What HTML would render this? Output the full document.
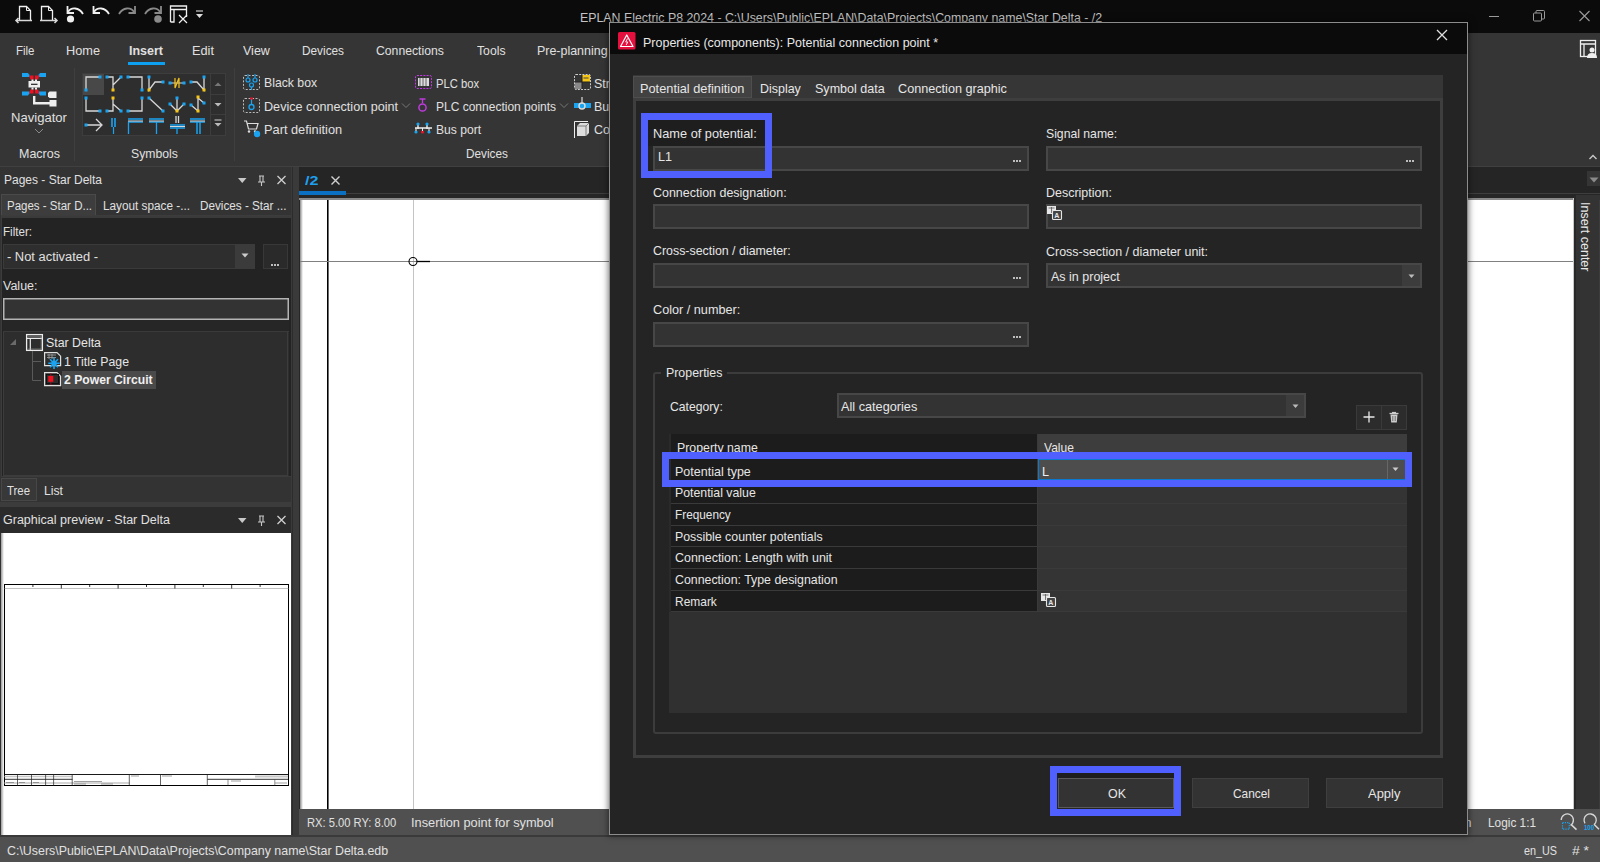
<!DOCTYPE html><html><head><meta charset="utf-8"><style>
html,body{margin:0;padding:0;}
body{width:1600px;height:862px;position:relative;overflow:hidden;background:#2b2b2b;font-family:"Liberation Sans",sans-serif;}
.r{position:absolute;}
.t{position:absolute;white-space:pre;line-height:20px;}
</style></head><body>
<div class="r" style="left:0px;top:0px;width:1600px;height:33px;background:#0b0b0b;"></div>
<div class="t" style="left:580.00px;top:7.74px;font-size:12.3px;color:#c4c4c4;transform:scaleX(1.0051);transform-origin:0 0;">EPLAN Electric P8 2024 - C:\Users\Public\EPLAN\Data\Projects\Company name\Star Delta - /2</div>
<svg class="r" style="left:14px;top:4px;" width="20" height="20" viewBox="0 0 20 20"><path d="M5.5 16.5V2.5h7l4 4v10" fill="none" stroke="#f0f0f0" stroke-width="1.3"/><path d="M12.5 2.5v4h4" fill="none" stroke="#f0f0f0" stroke-width="1"/><path d="M2 16.5h16M4.5 14l-2.5 2.5 2.5 2.5" fill="none" stroke="#d8d8d8" stroke-width="1.5"/></svg>
<svg class="r" style="left:39px;top:4px;" width="20" height="20" viewBox="0 0 20 20"><path d="M2.5 16.5V2.5h7l4 4v10" fill="none" stroke="#f0f0f0" stroke-width="1.3"/><path d="M9.5 2.5v4h4" fill="none" stroke="#f0f0f0" stroke-width="1"/><path d="M1 16.5h17M15.5 14l2.5 2.5-2.5 2.5" fill="none" stroke="#d8d8d8" stroke-width="1.5"/></svg>
<svg class="r" style="left:65px;top:3px;" width="22" height="22" viewBox="0 0 22 22"><path d="M3 9 C6 4, 14 4, 18 11" fill="none" stroke="#f0f0f0" stroke-width="1.8"/><path d="M2.5 3v7h6.5" fill="none" stroke="#f0f0f0" stroke-width="1.8"/><circle cx="5.5" cy="16" r="3.6" fill="#f0f0f0"/></svg>
<svg class="r" style="left:91px;top:3px;" width="22" height="22" viewBox="0 0 22 22"><path d="M3 9 C6 4, 14 4, 18 11" fill="none" stroke="#f0f0f0" stroke-width="1.8"/><path d="M2.5 3v7h6.5" fill="none" stroke="#f0f0f0" stroke-width="1.8"/></svg>
<svg class="r" style="left:117px;top:3px;" width="22" height="22" viewBox="0 0 22 22"><path d="M2 11 C6 4, 14 4, 17 9" fill="none" stroke="#8a8a8a" stroke-width="1.8"/><path d="M18 3v7h-6.5" fill="none" stroke="#8a8a8a" stroke-width="1.8"/></svg>
<svg class="r" style="left:143px;top:3px;" width="22" height="22" viewBox="0 0 22 22"><path d="M2 11 C6 4, 14 4, 17 9" fill="none" stroke="#8a8a8a" stroke-width="1.8"/><path d="M18 3v7h-6.5" fill="none" stroke="#8a8a8a" stroke-width="1.8"/><circle cx="15" cy="16" r="3.8" fill="#8a8a8a"/></svg>
<svg class="r" style="left:168px;top:4px;" width="22" height="20" viewBox="0 0 22 20"><path d="M2.5 18V2h16v11" fill="none" stroke="#f0f0f0" stroke-width="1.3"/><path d="M2.5 5.5h16M6 5.5V18H2.5" fill="none" stroke="#f0f0f0" stroke-width="1.3"/><path d="M11 11l8 8M19 11l-8 8" stroke="#f0f0f0" stroke-width="1.2"/></svg>
<svg class="r" style="left:195px;top:9px;" width="10" height="10" viewBox="0 0 10 10"><path d="M1 2h7" stroke="#ccc" stroke-width="1.2"/><path d="M1 5h7l-3.5 4z" fill="#ddd"/></svg>
<svg class="r" style="left:1486px;top:8px;" width="16" height="16" viewBox="0 0 16 16"><path d="M3 8.5h10" stroke="#9a9a9a" stroke-width="1"/></svg>
<svg class="r" style="left:1531px;top:8px;" width="16" height="16" viewBox="0 0 16 16"><rect x="2.5" y="5" width="8" height="8" rx="1" fill="none" stroke="#9a9a9a"/><path d="M5 5V3.5a1 1 0 0 1 1-1h6.5a1 1 0 0 1 1 1V10a1 1 0 0 1-1 1H10.5" fill="none" stroke="#9a9a9a"/></svg>
<svg class="r" style="left:1576px;top:8px;" width="16" height="16" viewBox="0 0 16 16"><path d="M3.5 3l10 10M13.5 3l-10 10" stroke="#9a9a9a" stroke-width="1.1"/></svg>
<div class="r" style="left:0px;top:33px;width:1600px;height:133px;background:#353535;"></div>
<div class="r" style="left:0px;top:166px;width:1600px;height:1px;background:#404040;"></div>
<div class="t" style="left:15.50px;top:40.82px;font-size:13.5px;color:#e0e0e0;transform:scaleX(0.8506);transform-origin:0 0;">File</div>
<div class="t" style="left:66.00px;top:40.82px;font-size:13.5px;color:#e0e0e0;transform:scaleX(0.9444);transform-origin:0 0;">Home</div>
<div class="t" style="left:129.00px;top:40.82px;font-size:13.5px;color:#e0e0e0;font-weight:bold;transform:scaleX(0.9252);transform-origin:0 0;">Insert</div>
<div class="t" style="left:192.00px;top:40.82px;font-size:13.5px;color:#e0e0e0;transform:scaleX(0.9462);transform-origin:0 0;">Edit</div>
<div class="t" style="left:243.00px;top:40.82px;font-size:13.5px;color:#e0e0e0;transform:scaleX(0.9270);transform-origin:0 0;">View</div>
<div class="t" style="left:301.70px;top:40.82px;font-size:13.5px;color:#e0e0e0;transform:scaleX(0.8750);transform-origin:0 0;">Devices</div>
<div class="t" style="left:376.00px;top:40.82px;font-size:13.5px;color:#e0e0e0;transform:scaleX(0.9040);transform-origin:0 0;">Connections</div>
<div class="t" style="left:476.50px;top:40.82px;font-size:13.5px;color:#e0e0e0;transform:scaleX(0.9048);transform-origin:0 0;">Tools</div>
<div class="t" style="left:537.00px;top:40.82px;font-size:13.5px;color:#e0e0e0;transform:scaleX(0.9216);transform-origin:0 0;">Pre-planning</div>
<div class="r" style="left:128px;top:62px;width:37px;height:3px;background:#0ea0f0;"></div>
<div class="r" style="left:74px;top:68px;width:1px;height:93px;background:#3f3f3f;"></div>
<div class="r" style="left:234px;top:68px;width:1px;height:93px;background:#3f3f3f;"></div>
<svg class="r" style="left:18px;top:68px;" width="44" height="44" viewBox="18 68 44 44"><path d="M22 73h6l1 1.5h0.5v2.5H22z" fill="#1aa3f0"/><path d="M46 73h-6l-1 1.5h-0.5v2.5H46z" fill="#1aa3f0"/><path d="M22 95.5h6l1-1.5h0.5v-2.5H22z" fill="#1aa3f0"/><path d="M46 95.5h-6l-1-1.5h-0.5v-2.5H46z" fill="#1aa3f0"/><path d="M29 75.5h4.5v4h-3z M39.5 75.5h-4.5v4h3z M29 93.5h4.5v-4h-3z M39.5 93.5h-4.5v-4h3z" fill="#f01020"/><path d="M31.5 79.5h2v2h-2z M35 79.5h2v2h-2z M31.5 87.5h2v2h-2z M35 87.5h2v2h-2z" fill="#eee"/><rect x="28.5" y="81" width="11.5" height="6.5" fill="#eee"/><path d="M31 84.3h6.5" stroke="#222" stroke-width="1.2"/><path d="M34.2 96v7.2H50" fill="none" stroke="#eee" stroke-width="2.4"/><path d="M49.5 91.5h7v6.5h-7l-1.5-1.5v-3.5z" fill="#eee"/><rect x="49.5" y="100" width="7" height="6.5" fill="#eee"/></svg>
<div class="t" style="left:11.00px;top:108.13px;font-size:12.6px;color:#e0e0e0;transform:scaleX(1.0370);transform-origin:0 0;">Navigator</div>
<svg class="r" style="left:34px;top:128px;" width="10" height="6" viewBox="0 0 10 6"><path d="M1 1l4 4 4-4" fill="none" stroke="#888" stroke-width="1"/></svg>
<div class="t" style="left:19.00px;top:144.13px;font-size:12.6px;color:#e0e0e0;transform:scaleX(0.9909);transform-origin:0 0;">Macros</div>
<div class="t" style="left:131.00px;top:144.13px;font-size:12.6px;color:#e0e0e0;transform:scaleX(0.9716);transform-origin:0 0;">Symbols</div>
<div class="r" style="left:82px;top:73px;width:144px;height:63px;background:#2e2e2e;box-shadow:inset 0 0 0 1px #3d3d3d;"></div>
<div class="r" style="left:83px;top:74px;width:21px;height:21px;background:#484848;"></div>
<div class="r" style="left:210px;top:73px;width:1px;height:63px;background:#3d3d3d;"></div>
<div class="r" style="left:211px;top:94px;width:15px;height:1px;background:#3d3d3d;"></div>
<div class="r" style="left:211px;top:114px;width:15px;height:1px;background:#3d3d3d;"></div>
<svg class="r" style="left:80px;top:70px;" width="150" height="70" viewBox="80 70 150 70"><path d="M86 90 V77 H100" fill="none" stroke="#d8d8d8" stroke-width="1.3"/><rect x="98.5" y="75.5" width="3" height="3" fill="#1aa3f0"/><rect x="84.5" y="88.5" width="3" height="3" fill="#1aa3f0"/><path d="M107 77 H113 V90 M113 85 L121 77" fill="none" stroke="#d8d8d8" stroke-width="1.3"/><rect x="105.5" y="75.5" width="3" height="3" fill="#1aa3f0"/><rect x="119.5" y="75.5" width="3" height="3" fill="#1aa3f0"/><rect x="111.5" y="88.5" width="3" height="3" fill="#f5c518"/><path d="M128 77 H142 V90" fill="none" stroke="#d8d8d8" stroke-width="1.3"/><rect x="126.5" y="75.5" width="3" height="3" fill="#1aa3f0"/><rect x="140.5" y="88.5" width="3" height="3" fill="#1aa3f0"/><path d="M149 77 V90 L155 82 H163" fill="none" stroke="#d8d8d8" stroke-width="1.3"/><rect x="147.5" y="75.5" width="3" height="3" fill="#1aa3f0"/><rect x="161.5" y="80.5" width="3" height="3" fill="#1aa3f0"/><rect x="147.5" y="88.5" width="3" height="3" fill="#f5c518"/><path d="M170 83 H184" fill="none" stroke="#d8d8d8" stroke-width="1"/><path d="M175 78 V88 L179 78 V88" fill="none" stroke="#f5c518" stroke-width="1.2"/><rect x="168.5" y="81.5" width="3" height="3" fill="#1aa3f0"/><rect x="182.5" y="81.5" width="3" height="3" fill="#1aa3f0"/><path d="M191 82 H197 L204 90 V77" fill="none" stroke="#d8d8d8" stroke-width="1.3"/><rect x="189.5" y="80.5" width="3" height="3" fill="#1aa3f0"/><rect x="202.5" y="75.5" width="3" height="3" fill="#1aa3f0"/><rect x="202.5" y="88.5" width="3" height="3" fill="#f5c518"/><path d="M86 98 V111 H100" fill="none" stroke="#d8d8d8" stroke-width="1.3"/><rect x="84.5" y="96.5" width="3" height="3" fill="#1aa3f0"/><rect x="98.5" y="109.5" width="3" height="3" fill="#1aa3f0"/><path d="M107 111 H113 V98 M113 104 L121 111" fill="none" stroke="#d8d8d8" stroke-width="1.3"/><rect x="111.5" y="96.5" width="3" height="3" fill="#f5c518"/><rect x="105.5" y="109.5" width="3" height="3" fill="#1aa3f0"/><rect x="119.5" y="109.5" width="3" height="3" fill="#1aa3f0"/><path d="M128 111 H142 V98" fill="none" stroke="#d8d8d8" stroke-width="1.3"/><rect x="126.5" y="109.5" width="3" height="3" fill="#1aa3f0"/><rect x="140.5" y="96.5" width="3" height="3" fill="#1aa3f0"/><path d="M149 98 L163 111" fill="none" stroke="#d8d8d8" stroke-width="1.3"/><rect x="147.5" y="96.5" width="3" height="3" fill="#1aa3f0"/><rect x="161.5" y="109.5" width="3" height="3" fill="#1aa3f0"/><path d="M177 98 V111 M170 104 L177 111 L184 104" fill="none" stroke="#d8d8d8" stroke-width="1.3"/><rect x="175.5" y="96.5" width="3" height="3" fill="#1aa3f0"/><rect x="168.5" y="102.5" width="3" height="3" fill="#1aa3f0"/><rect x="182.5" y="102.5" width="3" height="3" fill="#1aa3f0"/><rect x="175.5" y="109.5" width="3" height="3" fill="#f5c518"/><path d="M198 97 V111 M198 98 L204 103 M191 105 L198 111" fill="none" stroke="#d8d8d8" stroke-width="1.3"/><rect x="196.5" y="95.5" width="3" height="3" fill="#f5c518"/><rect x="196.5" y="109.5" width="3" height="3" fill="#f5c518"/><rect x="202.5" y="101.5" width="3" height="3" fill="#1aa3f0"/><rect x="189.5" y="103.5" width="3" height="3" fill="#1aa3f0"/><path d="M86 125 H101 M96 119 L102 125 L96 131" fill="none" stroke="#d8d8d8" stroke-width="1.3"/><rect x="84.5" y="123.5" width="3" height="3" fill="#1aa3f0"/><path d="M112 118 V127 M115 118 V127" fill="none" stroke="#1aa3f0" stroke-width="1.6"/><path d="M113.5 127 V134" fill="none" stroke="#1aa3f0" stroke-width="1.2"/><path d="M128 119 H143 M128 122 H143" fill="none" stroke="#1aa3f0" stroke-width="1.5"/><path d="M128 121 H143" fill="none" stroke="#d8d8d8" stroke-width="1"/><path d="M128.5 122 V134" fill="none" stroke="#1aa3f0" stroke-width="1.3"/><path d="M149 119 H164 M149 122 H164" fill="none" stroke="#1aa3f0" stroke-width="1.5"/><path d="M149 121 H164" fill="none" stroke="#d8d8d8" stroke-width="1"/><path d="M156.5 122 V134" fill="none" stroke="#1aa3f0" stroke-width="1.3"/><path d="M176 116 V123 M178.5 116 V123" fill="none" stroke="#d8d8d8" stroke-width="1.3"/><path d="M170 125 H185 M170 128 H185" fill="none" stroke="#1aa3f0" stroke-width="1.5"/><path d="M170 126.5 H185" fill="none" stroke="#d8d8d8" stroke-width="1"/><path d="M177 128 V134" fill="none" stroke="#1aa3f0" stroke-width="1.3"/><path d="M190 119 H205 M190 122 H205" fill="none" stroke="#1aa3f0" stroke-width="1.5"/><path d="M190 121 H205" fill="none" stroke="#d8d8d8" stroke-width="1"/><path d="M197 122 V134 M200 122 V134" fill="none" stroke="#1aa3f0" stroke-width="1.5"/><path d="M214.5 86 L218 82.5 L221.5 86z" fill="#777"/><path d="M214.5 103 L218 106.5 L221.5 103z" fill="#bbb"/><path d="M214.5 120 h7" stroke="#bbb" stroke-width="1.2"/><path d="M214.5 123 L218 126.5 L221.5 123z" fill="#bbb"/></svg>
<svg class="r" style="left:240px;top:70px;" width="25" height="70" viewBox="240 70 25 70"><rect x="243.5" y="75.5" width="16" height="14" rx="1.5" fill="none" stroke="#bbb" stroke-dasharray="2 1.5"/><circle cx="248" cy="80" r="2" fill="none" stroke="#1aa3f0" stroke-width="1.2"/><circle cx="255" cy="80" r="2" fill="none" stroke="#1aa3f0" stroke-width="1.2"/><circle cx="251.5" cy="85" r="2" fill="none" stroke="#1aa3f0" stroke-width="1.2"/><path d="M248 74v4 M255 74v4 M251.5 87v3" stroke="#1aa3f0" stroke-width="1.1"/><rect x="243.5" y="98.5" width="16" height="14" rx="1.5" fill="none" stroke="#bbb" stroke-dasharray="2 1.5"/><circle cx="251.5" cy="107" r="2.5" fill="none" stroke="#1aa3f0" stroke-width="1.3"/><path d="M251.5 99v5.5" stroke="#1aa3f0" stroke-width="1.2"/><rect x="250" y="97.5" width="3" height="2" fill="#e8142a"/><path d="M244 121 h2.5 l2 8 h8 l1.5 -5.5 h-10.5" fill="none" stroke="#ddd" stroke-width="1.2"/><circle cx="249" cy="131.5" r="1.2" fill="#ddd"/><circle cx="255" cy="131.5" r="1.2" fill="#ddd"/><circle cx="257" cy="134" r="3.2" fill="#1aa3f0"/></svg>
<div class="t" style="left:264.00px;top:73.40px;font-size:12.4px;color:#e0e0e0;transform:scaleX(0.9883);transform-origin:0 0;">Black box</div>
<div class="t" style="left:264.00px;top:96.83px;font-size:12.9px;color:#e0e0e0;transform:scaleX(0.9799);transform-origin:0 0;">Device connection point</div>
<svg class="r" style="left:401px;top:102px;" width="10" height="7" viewBox="0 0 10 7"><path d="M1 1.5l4 4 4-4" fill="none" stroke="#777" stroke-width="1"/></svg>
<div class="t" style="left:264.00px;top:120.40px;font-size:12.4px;color:#e0e0e0;transform:scaleX(1.0314);transform-origin:0 0;">Part definition</div>
<svg class="r" style="left:412px;top:70px;" width="24" height="70" viewBox="412 70 24 70"><rect x="415.5" y="75.5" width="16" height="13" rx="1.5" fill="none" stroke="#c03ae0" stroke-dasharray="2 1.2"/><rect x="418" y="78" width="11" height="8" fill="#ddd"/><path d="M420 78v8 M423 78v8 M426 78v8" stroke="#555" stroke-width="0.9"/><path d="M419.5 99 h6 M422.5 99 v4" stroke="#c03ae0" stroke-width="1.3"/><circle cx="422.5" cy="107.5" r="3.6" fill="none" stroke="#c03ae0" stroke-width="1.5"/><path d="M415 128 h17 M418 123v6 M427 123v6" stroke="#eee" stroke-width="1.4"/><circle cx="418" cy="124" r="1.6" fill="#1aa3f0"/><circle cx="427" cy="124" r="1.6" fill="#1aa3f0"/><circle cx="416" cy="132" r="1.6" fill="#1aa3f0"/><circle cx="422.5" cy="132" r="1.6" fill="#e8142a"/><circle cx="429" cy="132" r="1.6" fill="#1aa3f0"/><path d="M416 128v3 M422.5 128v3 M429 128v3" stroke="#eee"/></svg>
<div class="t" style="left:435.50px;top:73.60px;font-size:12.4px;color:#e0e0e0;transform:scaleX(0.9053);transform-origin:0 0;">PLC box</div>
<div class="t" style="left:435.50px;top:97.00px;font-size:12.4px;color:#e0e0e0;transform:scaleX(0.9687);transform-origin:0 0;">PLC connection points</div>
<svg class="r" style="left:559px;top:102px;" width="10" height="7" viewBox="0 0 10 7"><path d="M1 1.5l4 4 4-4" fill="none" stroke="#777" stroke-width="1"/></svg>
<div class="t" style="left:435.50px;top:120.40px;font-size:12.4px;color:#e0e0e0;transform:scaleX(0.9756);transform-origin:0 0;">Bus port</div>
<svg class="r" style="left:572px;top:70px;" width="37" height="70" viewBox="572 70 37 70"><rect x="574.5" y="74.5" width="16" height="15" rx="1.5" fill="none" stroke="#ccc" stroke-dasharray="2 1.2"/><rect x="582" y="75" width="8" height="7" fill="#f5c518"/><path d="M583.5 78h5" stroke="#444"/><rect x="575" y="82" width="7" height="7" fill="#888"/><path d="M575 82h15 M582 75v14" stroke="#222"/><path d="M582 97v6" stroke="#ddd" stroke-width="1.2"/><rect x="574" y="103" width="17" height="5" fill="#1aa3f0"/><circle cx="582" cy="106" r="3" fill="none" stroke="#ddd" stroke-width="1.4"/><path d="M574.5 138 V121.5 H588" fill="none" stroke="#eee" stroke-width="1"/><path d="M577 126 l3-3 h9 v10 l-3 3 h-9z" fill="#ddd"/><path d="M577 126h9v10 M586 126l3-3" fill="none" stroke="#666" stroke-width="0.8"/></svg>
<div class="t" style="left:594.00px;top:73.60px;font-size:12.4px;color:#e0e0e0;">Str</div>
<div class="t" style="left:594.00px;top:97.00px;font-size:12.4px;color:#e0e0e0;">Bu</div>
<div class="t" style="left:594.00px;top:120.40px;font-size:12.4px;color:#e0e0e0;">Co</div>
<div class="t" style="left:466.00px;top:144.23px;font-size:12.6px;color:#e0e0e0;transform:scaleX(0.9359);transform-origin:0 0;">Devices</div>
<svg class="r" style="left:1575px;top:36px;" width="25" height="26" viewBox="1575 36 25 26"><rect x="1580.5" y="40.5" width="15" height="16" fill="none" stroke="#eee" stroke-width="1.3"/><path d="M1580.5 44h15 M1584 44v12.5" stroke="#eee" stroke-width="1.3"/><circle cx="1592" cy="50" r="2.5" fill="#eee"/><path d="M1587 58 q0-5 5-5 q5 0 5 5z" fill="#eee"/></svg>
<svg class="r" style="left:1587px;top:153px;" width="12" height="8" viewBox="0 0 12 8"><path d="M2.5 6l3.5-3.5 3.5 3.5" fill="none" stroke="#c8c8c8" stroke-width="1.4"/></svg>
<div class="r" style="left:0px;top:167px;width:299px;height:670px;background:#333333;"></div>
<div class="t" style="left:3.50px;top:170.27px;font-size:12.5px;color:#e0e0e0;transform:scaleX(0.9596);transform-origin:0 0;">Pages - Star Delta</div>
<svg class="r" style="left:236px;top:175px;" width="52" height="12" viewBox="236 175 52 12"><path d="M238 178h8.5l-4.25 5z" fill="#c8c8c8"/><path d="M259 176h5 M260 176v6 M263 176v6 M258 182h7 M261.5 182v4" fill="none" stroke="#c8c8c8" stroke-width="1.1"/><path d="M277.5 176l8 8 M285.5 176l-8 8" stroke="#d0d0d0" stroke-width="1.3"/></svg>
<div class="r" style="left:1px;top:194px;width:95px;height:22px;background:#3d3d3d;box-shadow:inset 0 0 0 1px #4a4a4a;"></div>
<div class="t" style="left:7.00px;top:196.27px;font-size:12.5px;color:#e0e0e0;transform:scaleX(0.9202);transform-origin:0 0;">Pages - Star D...</div>
<div class="t" style="left:103.00px;top:196.27px;font-size:12.5px;color:#e0e0e0;transform:scaleX(0.9418);transform-origin:0 0;">Layout space -...</div>
<div class="t" style="left:199.50px;top:196.27px;font-size:12.5px;color:#e0e0e0;transform:scaleX(0.9364);transform-origin:0 0;">Devices - Star ...</div>
<div class="r" style="left:1px;top:215px;width:291px;height:262px;background:#232323;box-shadow:inset 0 0 0 1px #3c3c3c;"></div>
<div class="r" style="left:2px;top:216px;width:289px;height:2px;background:#3a3a3a;"></div>
<div class="t" style="left:3.00px;top:222.17px;font-size:12.5px;color:#e0e0e0;transform:scaleX(0.9280);transform-origin:0 0;">Filter:</div>
<div class="r" style="left:3px;top:244px;width:252px;height:25px;background:#2e2e2e;box-shadow:inset 0 0 0 1px #3a3a3a;"></div>
<div class="r" style="left:235px;top:244px;width:20px;height:25px;background:#3b3b3b;"></div>
<svg class="r" style="left:241px;top:253px;" width="9" height="6" viewBox="0 0 9 6"><path d="M0.5 0.5h7l-3.5 4z" fill="#ccc"/></svg>
<div class="t" style="left:7.00px;top:247.27px;font-size:12.5px;color:#e0e0e0;transform:scaleX(1.0312);transform-origin:0 0;">- Not activated -</div>
<div class="r" style="left:263px;top:244px;width:25px;height:25px;background:#2a2a2a;box-shadow:inset 0 0 0 1px #383838;"></div>
<div class="r" style="left:271px;top:264px;width:2px;height:2px;background:#bdbdbd;"></div>
<div class="r" style="left:274px;top:264px;width:2px;height:2px;background:#bdbdbd;"></div>
<div class="r" style="left:277px;top:264px;width:2px;height:2px;background:#bdbdbd;"></div>
<div class="t" style="left:3.00px;top:276.47px;font-size:12.5px;color:#e0e0e0;">Value:</div>
<div class="r" style="left:3px;top:298px;width:286px;height:22px;background:#333333;box-shadow:inset 0 0 0 1px #b4b4b4;box-shadow:inset 0 0 0 1.5px #b4b4b4;"></div>
<div class="r" style="left:3px;top:320px;width:286px;height:12px;background:#262626;"></div>
<div class="r" style="left:3px;top:331px;width:286px;height:1px;background:#3a3a3a;"></div>
<div class="r" style="left:3px;top:332px;width:286px;height:144px;background:#2d2d2d;"></div>
<div class="r" style="left:3px;top:332px;width:1px;height:144px;background:#3c3c3c;"></div>
<div class="r" style="left:287px;top:332px;width:1px;height:144px;background:#3c3c3c;"></div>
<div class="r" style="left:3px;top:475px;width:285px;height:1px;background:#3c3c3c;"></div>
<svg class="r" style="left:8px;top:330px;" width="160" height="60" viewBox="8 330 160 60"><path d="M10 345 L16 339 V345z" fill="#6a6a6a"/><rect x="26.6" y="334.6" width="15.8" height="15.8" fill="none" stroke="#ececec" stroke-width="1.3"/><path d="M26.6 338.3h15.8 M30.3 338.3v12.1" stroke="#ececec" stroke-width="1.2"/><path d="M28 336.3h13 M41.2 336v13.5 M28 349h13" stroke="#999" stroke-width="0.6"/><path d="M32.5 351 V380.5 M32.5 361.5 H41 M32.5 380.5 H41" stroke="#5a5a5a" stroke-width="1"/><path d="M44.6 365.6 V352.6 H57 L60.6 356.2 V365.6z" fill="#2d2d2d" stroke="#e0e0e0" stroke-width="1.2"/><path d="M47 355h9 M47 357.5h9 M49 354v5 M52 354v5" stroke="#9a9a9a" stroke-width="0.9"/><path d="M54 357.5v11.5 M48.3 363.2h11.4 M50 359.2l8 8 M58 359.2l-8 8" stroke="#1aa3f0" stroke-width="1.6"/><circle cx="54" cy="363.2" r="2.6" fill="#1aa3f0"/><path d="M44.6 385.6 V372.6 H57 L60.6 376.2 V385.6z" fill="#2d2d2d" stroke="#e0e0e0" stroke-width="1.2"/><rect x="46.5" y="374.5" width="12" height="9" fill="none" stroke="#111" stroke-width="1"/><path d="M50.8 373v12" stroke="#a01020" stroke-width="0.8"/><rect x="48.3" y="376" width="5" height="5.8" fill="#f01020"/></svg>
<div class="t" style="left:46.00px;top:333.47px;font-size:12.5px;color:#e6e6e6;transform:scaleX(0.9888);transform-origin:0 0;">Star Delta</div>
<div class="t" style="left:64.00px;top:351.87px;font-size:12.5px;color:#e6e6e6;transform:scaleX(0.9848);transform-origin:0 0;">1 Title Page</div>
<div class="r" style="left:62px;top:371px;width:94px;height:18px;background:#4a4a4a;"></div>
<div class="t" style="left:64.00px;top:370.17px;font-size:12.2px;color:#f0f0f0;font-weight:bold;transform:scaleX(0.9986);transform-origin:0 0;">2 Power Circuit</div>
<div class="r" style="left:1px;top:478px;width:36px;height:23px;background:#383838;box-shadow:inset 0 0 0 1px #474747;"></div>
<div class="t" style="left:7.00px;top:481.07px;font-size:12.5px;color:#e0e0e0;transform:scaleX(0.9109);transform-origin:0 0;">Tree</div>
<div class="t" style="left:44.00px;top:481.07px;font-size:12.5px;color:#e0e0e0;transform:scaleX(0.9744);transform-origin:0 0;">List</div>
<div class="r" style="left:0px;top:502px;width:292px;height:5px;background:#3c3c3c;"></div>
<div class="r" style="left:0px;top:507px;width:292px;height:26px;background:#2b2b2b;"></div>
<div class="t" style="left:3.00px;top:510.17px;font-size:12.5px;color:#e0e0e0;transform:scaleX(1.0015);transform-origin:0 0;">Graphical preview - Star Delta</div>
<svg class="r" style="left:236px;top:515px;" width="52" height="12" viewBox="236 515 52 12"><path d="M238 518h8.5l-4.25 5z" fill="#c8c8c8"/><path d="M259 516h5 M260 516v6 M263 516v6 M258 522h7 M261.5 522v4" fill="none" stroke="#c8c8c8" stroke-width="1.1"/><path d="M277.5 516l8 8 M285.5 516l-8 8" stroke="#d0d0d0" stroke-width="1.3"/></svg>
<div class="r" style="left:1px;top:533px;width:290px;height:303px;background:#ffffff;"></div>
<div class="r" style="left:1px;top:533px;width:3px;height:303px;background:linear-gradient(90deg,#9a9a9a,#fff);"></div>
<div class="r" style="left:291px;top:167px;width:8px;height:670px;background:#3a3a3a;"></div>
<div class="r" style="left:292px;top:167px;width:1px;height:670px;background:#2c2c2c;"></div>
<div class="r" style="left:299px;top:167px;width:1301px;height:28px;background:#252525;"></div>
<div class="r" style="left:299px;top:193px;width:1301px;height:1px;background:#3e3e3e;"></div>
<div class="r" style="left:299px;top:194px;width:1301px;height:615px;background:#262626;"></div>
<div class="t" style="left:305.00px;top:170.70px;font-size:13px;color:#1ea0f0;font-weight:bold;transform:scaleX(1.2414);transform-origin:0 0;">/2</div>
<svg class="r" style="left:330px;top:175px;" width="11" height="11" viewBox="0 0 11 11"><path d="M1.5 1.5l8 8 M9.5 1.5l-8 8" stroke="#d0d0d0" stroke-width="1.4"/></svg>
<div class="r" style="left:299px;top:191px;width:47px;height:4px;background:#0b6fc2;"></div>
<div class="r" style="left:1587px;top:171px;width:13px;height:15px;background:#353535;"></div>
<svg class="r" style="left:1589px;top:177px;" width="11" height="8" viewBox="0 0 11 8"><path d="M0.5 0.5h9l-4.5 5z" fill="#8a8a8a"/></svg>
<div class="r" style="left:299px;top:198px;width:1275px;height:2px;background:#8a8a8a;"></div>
<div class="r" style="left:300px;top:200px;width:1273px;height:609px;background:#ffffff;"></div>
<div class="r" style="left:300px;top:200px;width:3px;height:609px;background:linear-gradient(90deg,#8a8a8a,#ffffff);"></div>
<div class="r" style="left:1573px;top:198px;width:1px;height:611px;background:#c8c8c8;"></div>
<div class="r" style="left:327px;top:200px;width:1px;height:609px;background:#000000;"></div>
<div class="r" style="left:328px;top:200px;width:1px;height:609px;background:#6a6a6a;"></div>
<div class="r" style="left:413px;top:200px;width:1px;height:609px;background:#c4c4c4;"></div>
<div class="r" style="left:300px;top:261px;width:1273px;height:1px;background:#808080;"></div>
<svg class="r" style="left:405px;top:253px;" width="30" height="17" viewBox="405 253 30 17"><circle cx="413" cy="261.5" r="4" fill="none" stroke="#000" stroke-width="1.1"/><path d="M417 261.5h13" stroke="#000" stroke-width="1.3"/></svg>
<div class="r" style="left:1574px;top:195px;width:26px;height:614px;background:#333333;"></div>
<div class="r" style="left:1574px;top:195px;width:2px;height:614px;background:#282828;"></div>
<div class="r" style="left:1599px;top:200px;width:1px;height:609px;background:#3c3c3c;"></div>
<div class="t" style="left:1591px;top:202px;font-size:12.5px;color:#e8e8e8;transform-origin:0 0;transform:rotate(90deg);line-height:12px;">Insert center</div>
<div class="r" style="left:299px;top:809px;width:1301px;height:26px;background:#505050;"></div>
<div class="t" style="left:306.50px;top:813.13px;font-size:12.6px;color:#e0e0e0;transform:scaleX(0.8872);transform-origin:0 0;">RX: 5.00 RY: 8.00</div>
<div class="t" style="left:411.00px;top:813.17px;font-size:12.5px;color:#e0e0e0;transform:scaleX(1.0213);transform-origin:0 0;">Insertion point for symbol</div>
<div class="t" style="left:1464.50px;top:813.17px;font-size:12.5px;color:#e0e0e0;">n</div>
<div class="t" style="left:1488.00px;top:813.20px;font-size:12.4px;color:#e0e0e0;transform:scaleX(0.9552);transform-origin:0 0;">Logic 1:1</div>
<svg class="r" style="left:1558px;top:812px;" width="42" height="22" viewBox="1558 812 42 22"><path d="M1561.2 820 A6.1 6.1 0 1 1 1570.5 825.3" fill="none" stroke="#d8d8d8" stroke-width="1.3"/><path d="M1571.2 824.6l5.3 5" stroke="#d8d8d8" stroke-width="1.5"/><rect x="1562.5" y="822.6" width="6.8" height="6.6" fill="none" stroke="#1aa3f0" stroke-width="1.2" stroke-dasharray="1.2 1.1"/><path d="M1585 823.3 A6.1 6.1 0 1 1 1594.2 824.6" fill="none" stroke="#d8d8d8" stroke-width="1.3"/><path d="M1594 824.3l5 5" stroke="#d8d8d8" stroke-width="1.5"/><text x="1584" y="830" font-size="6.5" font-weight="bold" fill="#1aa3f0" font-family="Liberation Sans" textLength="10" lengthAdjust="spacingAndGlyphs">100</text></svg>
<div class="r" style="left:0px;top:835px;width:1600px;height:2px;background:#3a3a3a;"></div>
<div class="r" style="left:0px;top:837px;width:1600px;height:25px;background:#505050;"></div>
<div class="t" style="left:7.00px;top:840.63px;font-size:12.6px;color:#e0e0e0;transform:scaleX(0.9845);transform-origin:0 0;">C:\Users\Public\EPLAN\Data\Projects\Company name\Star Delta.edb</div>
<div class="t" style="left:1524.00px;top:840.70px;font-size:12.4px;color:#e0e0e0;transform:scaleX(0.8713);transform-origin:0 0;">en_US</div>
<div class="t" style="left:1572.00px;top:840.70px;font-size:12.4px;color:#e0e0e0;transform:scaleX(1.1240);transform-origin:0 0;"># *</div>
<svg class="r" style="left:0px;top:580px;" width="295" height="210" viewBox="0 580 295 210"><rect x="4.5" y="584.5" width="284" height="201" fill="none" stroke="#000" stroke-width="1"/><path d="M4.5 588.5h284" stroke="#999" stroke-width="0.6"/><path d="M32.9 584.5v2.5" stroke="#000" stroke-width="0.8"/><path d="M61.3 584.5v4" stroke="#000" stroke-width="0.8"/><path d="M89.7 584.5v2.5" stroke="#000" stroke-width="0.8"/><path d="M118.1 584.5v4" stroke="#000" stroke-width="0.8"/><path d="M146.5 584.5v2.5" stroke="#000" stroke-width="0.8"/><path d="M174.9 584.5v4" stroke="#000" stroke-width="0.8"/><path d="M203.3 584.5v2.5" stroke="#000" stroke-width="0.8"/><path d="M231.7 584.5v4" stroke="#000" stroke-width="0.8"/><path d="M260.1 584.5v2.5" stroke="#000" stroke-width="0.8"/><path d="M4.5 774.5h284" stroke="#000" stroke-width="0.9"/><path d="M4.5 776.5h68 M4.5 783h125" stroke="#c8c8c8" stroke-width="1.6"/><path d="M255 776.5h33" stroke="#c8c8c8" stroke-width="2"/><path d="M4.5 779.3h68 M207.3 779.3h81" stroke="#000" stroke-width="0.8"/><path d="M17.5 774.5v11" stroke="#222" stroke-width="0.7"/><path d="M31.5 774.5v11" stroke="#222" stroke-width="0.7"/><path d="M45.6 774.5v11" stroke="#222" stroke-width="0.7"/><path d="M53.6 774.5v11" stroke="#222" stroke-width="0.7"/><path d="M72.2 774.5v11" stroke="#222" stroke-width="0.7"/><path d="M129.3 774.5v11" stroke="#222" stroke-width="0.7"/><path d="M160.5 774.5v11" stroke="#222" stroke-width="0.7"/><path d="M207.3 774.5v11" stroke="#222" stroke-width="0.7"/><path d="M228 779.3v6 M274.8 779.3v6" stroke="#444" stroke-width="0.6"/><path d="M74 781.5h28 M6 782.5h8 M19 782.5h6 M33 782.5h6 M74 784h12 M101 784h12 M131 776h8 M162 776h10 M231 781h10 M275 783h12" stroke="#777" stroke-width="0.7"/></svg>
<div class="r" style="left:609px;top:22px;width:859px;height:813px;background:#242424;box-shadow:0 0 6px 1px rgba(0,0,0,0.5);"></div>
<div class="r" style="left:609px;top:22px;width:859px;height:1px;background:#8c8c8c;"></div>
<div class="r" style="left:609px;top:834px;width:859px;height:1px;background:#8c8c8c;"></div>
<div class="r" style="left:609px;top:22px;width:1px;height:813px;background:#8c8c8c;"></div>
<div class="r" style="left:1467px;top:22px;width:1px;height:813px;background:#8c8c8c;"></div>
<div class="r" style="left:610px;top:23px;width:857px;height:31px;background:#0b0b0b;"></div>
<svg class="r" style="left:617px;top:31px;" width="20" height="20" viewBox="617 31 20 20"><rect x="618" y="32" width="17.5" height="17.5" rx="1.5" fill="#e5103d"/><path d="M626.75 35 L633 46.5 H620.5z" fill="none" stroke="#fff" stroke-width="1.2" stroke-linejoin="round"/><path d="M627.5 38.5 l-1.8 3.5 h2 l-1.5 3" fill="none" stroke="#fff" stroke-width="0.9"/></svg>
<div class="t" style="left:643.00px;top:33.17px;font-size:12.5px;color:#e8e8e8;transform:scaleX(0.9992);transform-origin:0 0;">Properties (components): Potential connection point *</div>
<svg class="r" style="left:1436px;top:29px;" width="12" height="12" viewBox="0 0 12 12"><path d="M1 1l10 10 M11 1l-10 10" stroke="#e0e0e0" stroke-width="1.3"/></svg>
<div class="r" style="left:633px;top:75px;width:810px;height:24px;background:#363636;"></div>
<div class="r" style="left:633px;top:76px;width:119px;height:22px;background:#424242;box-shadow:inset 0 0 0 1px #4e4e4e;"></div>
<div class="t" style="left:640.00px;top:78.63px;font-size:12.6px;color:#e6e6e6;transform:scaleX(1.0143);transform-origin:0 0;">Potential definition</div>
<div class="t" style="left:760.00px;top:78.63px;font-size:12.6px;color:#e6e6e6;transform:scaleX(0.9880);transform-origin:0 0;">Display</div>
<div class="t" style="left:814.50px;top:78.63px;font-size:12.6px;color:#e6e6e6;transform:scaleX(0.9964);transform-origin:0 0;">Symbol data</div>
<div class="t" style="left:897.50px;top:78.56px;font-size:12.8px;color:#e6e6e6;transform:scaleX(0.9875);transform-origin:0 0;">Connection graphic</div>
<div class="r" style="left:633px;top:98px;width:810px;height:660px;box-sizing:border-box;border:3px solid #3e3e3e;"></div>
<div class="t" style="left:653.00px;top:124.23px;font-size:12.6px;color:#e6e6e6;transform:scaleX(1.0146);transform-origin:0 0;">Name of potential:</div>
<div class="r" style="left:653px;top:146px;width:376px;height:25px;background:#333333;box-shadow:inset 0 0 0 2px #474747;"></div>
<div class="r" style="left:1013px;top:160px;width:2px;height:2px;background:#bdbdbd;"></div>
<div class="r" style="left:1016px;top:160px;width:2px;height:2px;background:#bdbdbd;"></div>
<div class="r" style="left:1019px;top:160px;width:2px;height:2px;background:#bdbdbd;"></div>
<div class="t" style="left:658.00px;top:147.43px;font-size:12.6px;color:#e6e6e6;">L1</div>
<div class="t" style="left:1046.00px;top:124.33px;font-size:12.6px;color:#e6e6e6;transform:scaleX(0.9695);transform-origin:0 0;">Signal name:</div>
<div class="r" style="left:1046px;top:146px;width:376px;height:25px;background:#333333;box-shadow:inset 0 0 0 2px #474747;"></div>
<div class="r" style="left:1406px;top:160px;width:2px;height:2px;background:#bdbdbd;"></div>
<div class="r" style="left:1409px;top:160px;width:2px;height:2px;background:#bdbdbd;"></div>
<div class="r" style="left:1412px;top:160px;width:2px;height:2px;background:#bdbdbd;"></div>
<div class="t" style="left:653.00px;top:183.03px;font-size:12.6px;color:#e6e6e6;transform:scaleX(0.9889);transform-origin:0 0;">Connection designation:</div>
<div class="r" style="left:653px;top:204px;width:376px;height:25px;background:#333333;box-shadow:inset 0 0 0 2px #474747;"></div>
<div class="t" style="left:1046.00px;top:183.13px;font-size:12.6px;color:#e6e6e6;transform:scaleX(0.9906);transform-origin:0 0;">Description:</div>
<div class="r" style="left:1046px;top:204px;width:376px;height:25px;background:#333333;box-shadow:inset 0 0 0 2px #474747;"></div>
<div class="t" style="left:653.00px;top:241.43px;font-size:12.6px;color:#e6e6e6;transform:scaleX(0.9831);transform-origin:0 0;">Cross-section / diameter:</div>
<div class="r" style="left:653px;top:263px;width:376px;height:25px;background:#333333;box-shadow:inset 0 0 0 2px #474747;"></div>
<div class="r" style="left:1013px;top:277px;width:2px;height:2px;background:#bdbdbd;"></div>
<div class="r" style="left:1016px;top:277px;width:2px;height:2px;background:#bdbdbd;"></div>
<div class="r" style="left:1019px;top:277px;width:2px;height:2px;background:#bdbdbd;"></div>
<div class="t" style="left:1046.00px;top:241.93px;font-size:12.6px;color:#e6e6e6;transform:scaleX(0.9893);transform-origin:0 0;">Cross-section / diameter unit:</div>
<div class="r" style="left:1046px;top:263px;width:376px;height:25px;background:#333333;box-shadow:inset 0 0 0 2px #474747;"></div>
<div class="r" style="left:1402px;top:265px;width:18px;height:21px;background:#3c3c3c;"></div>
<svg class="r" style="left:1408px;top:274px;" width="8" height="5" viewBox="0 0 8 5"><path d="M0.5 0.5h6l-3 3.5z" fill="#bbb"/></svg>
<div class="t" style="left:1050.50px;top:266.93px;font-size:12.6px;color:#e6e6e6;transform:scaleX(0.9928);transform-origin:0 0;">As in project</div>
<div class="t" style="left:653.00px;top:299.63px;font-size:12.6px;color:#e6e6e6;transform:scaleX(1.0057);transform-origin:0 0;">Color / number:</div>
<div class="r" style="left:653px;top:322px;width:376px;height:25px;background:#333333;box-shadow:inset 0 0 0 2px #474747;"></div>
<div class="r" style="left:1013px;top:336px;width:2px;height:2px;background:#bdbdbd;"></div>
<div class="r" style="left:1016px;top:336px;width:2px;height:2px;background:#bdbdbd;"></div>
<div class="r" style="left:1019px;top:336px;width:2px;height:2px;background:#bdbdbd;"></div>
<svg class="r" style="left:1046px;top:205px;" width="18" height="16" viewBox="1046 205 18 16"><rect x="1047" y="206" width="9" height="8" fill="#e6e6e6"/><path d="M1048.5 208h6 M1051.5 207v6" stroke="#555" stroke-width="0.8"/><rect x="1052.5" y="210.5" width="9" height="9" rx="1" fill="#444" stroke="#e6e6e6" stroke-width="1.1"/><text x="1054.3" y="218" font-size="7" font-weight="bold" fill="#e6e6e6" font-family="Liberation Sans">A</text></svg>
<div class="r" style="left:653px;top:372px;width:770px;height:362px;box-sizing:border-box;border:2px solid #3c3c3c;border-radius:3px;"></div>
<div class="r" style="left:661px;top:366px;width:66px;height:12px;background:#242424;"></div>
<div class="t" style="left:665.50px;top:363.13px;font-size:12.6px;color:#e6e6e6;transform:scaleX(0.9826);transform-origin:0 0;">Properties</div>
<div class="t" style="left:669.50px;top:396.63px;font-size:12.6px;color:#e6e6e6;transform:scaleX(0.9680);transform-origin:0 0;">Category:</div>
<div class="r" style="left:837px;top:393px;width:469px;height:25px;background:#333333;box-shadow:inset 0 0 0 2px #474747;"></div>
<div class="r" style="left:1286px;top:395px;width:18px;height:21px;background:#3c3c3c;"></div>
<svg class="r" style="left:1292px;top:404px;" width="8" height="5" viewBox="0 0 8 5"><path d="M0.5 0.5h6l-3 3.5z" fill="#bbb"/></svg>
<div class="t" style="left:841.00px;top:396.63px;font-size:12.6px;color:#e6e6e6;transform:scaleX(1.0086);transform-origin:0 0;">All categories</div>
<div class="r" style="left:1356px;top:405px;width:51px;height:25px;background:#2c2c2c;box-shadow:inset 0 0 0 1px #3a3a3a;"></div>
<div class="r" style="left:1381px;top:405px;width:1px;height:25px;background:#3a3a3a;"></div>
<svg class="r" style="left:1362px;top:410px;" width="14" height="14" viewBox="0 0 14 14"><path d="M7 1.5v11 M1.5 7h11" stroke="#e8e8e8" stroke-width="1.3"/></svg>
<svg class="r" style="left:1387px;top:410px;" width="14" height="14" viewBox="1387 410 14 14"><path d="M1389.5 413.5h9" stroke="#ccc" stroke-width="1.3"/><path d="M1392 412.5h4" stroke="#ccc" stroke-width="1.2"/><path d="M1390.5 414.5h7l-0.7 8h-5.6z" fill="#ccc"/><path d="M1392.8 416v5 M1395.2 416v5" stroke="#555" stroke-width="0.8"/></svg>
<div class="r" style="left:669px;top:434px;width:738px;height:279px;background:#303030;"></div>
<div class="r" style="left:669px;top:434px;width:369px;height:178px;background:#1c1c1c;"></div>
<div class="r" style="left:1038px;top:434px;width:369px;height:25px;background:#3d3d3d;"></div>
<div class="r" style="left:1038px;top:459px;width:369px;height:153px;background:#343434;"></div>
<div class="r" style="left:1037px;top:434px;width:1px;height:178px;background:#3a3a3a;"></div>
<div class="r" style="left:669px;top:434px;width:2px;height:178px;background:#2a2a2a;"></div>
<div class="r" style="left:671px;top:503px;width:736px;height:1px;background:#3a3a3a;"></div>
<div class="r" style="left:671px;top:525px;width:736px;height:1px;background:#3a3a3a;"></div>
<div class="r" style="left:671px;top:546px;width:736px;height:1px;background:#3a3a3a;"></div>
<div class="r" style="left:671px;top:568px;width:736px;height:1px;background:#3a3a3a;"></div>
<div class="r" style="left:671px;top:590px;width:736px;height:1px;background:#3a3a3a;"></div>
<div class="r" style="left:671px;top:611px;width:736px;height:1px;background:#3a3a3a;"></div>
<div class="t" style="left:677.00px;top:438.13px;font-size:12.6px;color:#e6e6e6;transform:scaleX(0.9789);transform-origin:0 0;">Property name</div>
<div class="t" style="left:1044.00px;top:437.63px;font-size:12.6px;color:#e6e6e6;transform:scaleX(0.9562);transform-origin:0 0;">Value</div>
<div class="t" style="left:674.50px;top:462.03px;font-size:12.6px;color:#e6e6e6;transform:scaleX(0.9935);transform-origin:0 0;">Potential type</div>
<div class="t" style="left:674.50px;top:483.23px;font-size:12.6px;color:#e6e6e6;transform:scaleX(0.9774);transform-origin:0 0;">Potential value</div>
<div class="t" style="left:674.50px;top:505.03px;font-size:12.6px;color:#e6e6e6;transform:scaleX(0.9372);transform-origin:0 0;">Frequency</div>
<div class="t" style="left:674.50px;top:526.83px;font-size:12.6px;color:#e6e6e6;transform:scaleX(0.9809);transform-origin:0 0;">Possible counter potentials</div>
<div class="t" style="left:674.50px;top:548.43px;font-size:12.6px;color:#e6e6e6;transform:scaleX(0.9882);transform-origin:0 0;">Connection: Length with unit</div>
<div class="t" style="left:674.50px;top:570.03px;font-size:12.6px;color:#e6e6e6;transform:scaleX(0.9812);transform-origin:0 0;">Connection: Type designation</div>
<div class="t" style="left:674.50px;top:591.83px;font-size:12.6px;color:#e6e6e6;transform:scaleX(0.9492);transform-origin:0 0;">Remark</div>
<div class="r" style="left:1038px;top:459px;width:367px;height:21px;background:#4d4d4d;"></div>
<div class="r" style="left:1038px;top:459px;width:367px;height:1px;background:#0a7ad0;"></div>
<div class="r" style="left:1038px;top:479px;width:367px;height:1px;background:#0a7ad0;"></div>
<div class="r" style="left:1038px;top:459px;width:1px;height:21px;background:#0a7ad0;"></div>
<div class="r" style="left:1387px;top:460px;width:1px;height:19px;background:#666666;"></div>
<svg class="r" style="left:1392px;top:467px;" width="8" height="5" viewBox="0 0 8 5"><path d="M0.5 0.5h6l-3 3.5z" fill="#ccc"/></svg>
<div class="t" style="left:1042.00px;top:462.13px;font-size:12.6px;color:#f0f0f0;">L</div>
<svg class="r" style="left:1040px;top:592px;" width="18" height="16" viewBox="1040 592 18 16"><rect x="1041" y="593" width="9" height="8" fill="#e6e6e6"/><path d="M1042.5 595h6 M1045.5 594v6" stroke="#555" stroke-width="0.8"/><rect x="1046.5" y="597.5" width="9" height="9" rx="1" fill="#444" stroke="#e6e6e6" stroke-width="1.1"/><text x="1048.3" y="605" font-size="7" font-weight="bold" fill="#e6e6e6" font-family="Liberation Sans">A</text></svg>
<div class="r" style="left:1058px;top:778px;width:117px;height:30px;background:#333333;box-shadow:inset 0 0 0 1px #3f3f3f;"></div>
<div class="r" style="left:1192px;top:778px;width:117px;height:30px;background:#333333;box-shadow:inset 0 0 0 1px #3f3f3f;"></div>
<div class="r" style="left:1326px;top:778px;width:117px;height:30px;background:#333333;box-shadow:inset 0 0 0 1px #3f3f3f;"></div>
<div class="r" style="left:1058px;top:778px;width:116px;height:30px;background:#333333;box-shadow:inset 0 0 0 1px #5a5a5a;"></div>
<div class="t" style="left:1108.00px;top:784.13px;font-size:12.6px;color:#e6e6e6;transform:scaleX(0.9863);transform-origin:0 0;">OK</div>
<div class="t" style="left:1233.00px;top:784.13px;font-size:12.6px;color:#e6e6e6;transform:scaleX(0.9427);transform-origin:0 0;">Cancel</div>
<div class="t" style="left:1368.00px;top:784.13px;font-size:12.6px;color:#e6e6e6;transform:scaleX(1.0277);transform-origin:0 0;">Apply</div>
<div class="r" style="left:648px;top:120px;width:117px;height:26px;background:#1e1e1e;"></div>
<div class="t" style="left:653.00px;top:124.23px;font-size:12.6px;color:#e6e6e6;transform:scaleX(1.0146);transform-origin:0 0;">Name of potential:</div>
<div class="r" style="left:641px;top:113px;width:131px;height:65px;box-sizing:border-box;border:7px solid #5060ff;"></div>
<div class="r" style="left:662px;top:452px;width:750px;height:35px;box-sizing:border-box;border:7px solid #5060ff;"></div>
<div class="r" style="left:1057px;top:773px;width:117px;height:5px;background:#1e1e1e;"></div>
<div class="r" style="left:1050px;top:766px;width:131px;height:50px;box-sizing:border-box;border:7px solid #5060ff;"></div>
</body></html>
